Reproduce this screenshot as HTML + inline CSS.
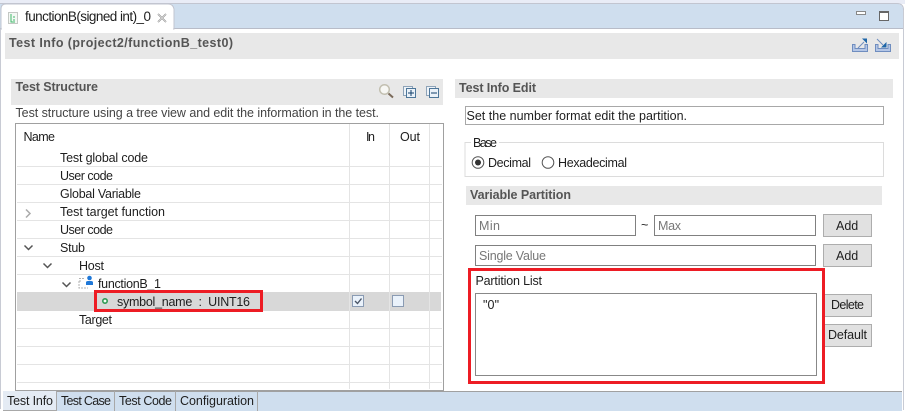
<!DOCTYPE html>
<html><head><meta charset="utf-8"><style>
html,body{margin:0;padding:0;background:#fff;width:905px;height:414px;overflow:hidden}
svg{display:block}
text{font-family:"Liberation Sans",sans-serif;font-size:12.5px;fill:#1e1e1e;white-space:pre}
.b{font-weight:bold;fill:#555;font-size:12.5px}
.g{fill:#777}
</style></head><body>
<svg width="905" height="414" viewBox="0 0 905 414" xmlns="http://www.w3.org/2000/svg" shape-rendering="crispEdges">
<rect width="905" height="414" fill="#fff"/>
<rect width="905" height="4" fill="#e9ecf6"/>
<path d="M0 4H897Q903 4 903 10V28H0Z" fill="#cfdeee"/>
<path d="M0 3.500H897Q903.500 3.500 903.500 10" fill="none" stroke="#c2c5d0" shape-rendering="auto"/>
<rect y="28" width="904" height="1" fill="#b8bcc8"/>
<rect x="903" y="10" width="1" height="400" fill="#c8cbd4"/>
<rect x="0" y="29" width="1" height="380" fill="#c8cbd4"/>
<path d="M1 29V9Q1 4 6 4H168Q173 4 174 9V29Z" fill="#fff" stroke="#c2c5d0" shape-rendering="auto"/>
<rect x="2" y="28" width="171" height="2" fill="#fff"/>
<!-- tab icon -->
<rect x="8.500" y="12.500" width="9" height="11" fill="#f4f8f4" stroke="#c4c8c4"/>
<path d="M11 14V22H15M13 17H15M13 20H15" fill="none" stroke="#3fb86a"/>
<text x="25" y="21" textLength="126" style="font-size:13.500px">functionB(signed int)_0</text>
<path d="M158 14L166 22M166 14L158 22" stroke="#9a9a9a" fill="none" stroke-width="1.600" shape-rendering="auto"/>
<path d="M158 14L166 22M166 14L158 22" stroke="#fff" fill="none" stroke-width="0.500" shape-rendering="auto"/>
<!-- min/max -->
<rect x="856.500" y="11.500" width="9" height="3" fill="#fff" stroke="#888"/>
<rect x="879.500" y="11.500" width="9" height="9" fill="#fff" stroke="#666"/>
<rect x="880" y="12" width="8" height="1" fill="#666"/>
<!-- header -->
<rect x="5" y="33" width="894" height="26" fill="#e8e8e8"/>
<text class="b" x="9" y="47" textLength="224">Test Info (project2/functionB_test0)</text>
<!-- export / import -->
<path d="M852.500 44.500V51.500H867.500V44.500H865V48.500H855V44.500Z" fill="#b4c6e6" stroke="#6f8dbf"/>
<path d="M858 48L864 42" stroke="#6f8dbf" fill="none" shape-rendering="auto"/>
<path d="M862 38.500H867V43.500Z" fill="#1f66a8" shape-rendering="auto"/>
<path d="M875.500 44.500V51.500H890.500V44.500H888V48.500H878V44.500Z" fill="#b4c6e6" stroke="#6f8dbf"/>
<path d="M877 39L883 45" stroke="#6f8dbf" fill="none" shape-rendering="auto"/>
<path d="M881 47.500H886.500V42Z" fill="#1f66a8" shape-rendering="auto"/>
<!-- section headers -->
<rect x="11" y="79" width="432" height="26" fill="#e8e8e8"/>
<text class="b" x="15.500" y="91" textLength="82.500">Test Structure</text>
<rect x="455" y="79" width="438" height="19" fill="#e8e8e8"/>
<text class="b" x="459" y="92" textLength="77">Test Info Edit</text>
<!-- search & tree tools -->
<circle cx="384.500" cy="89.500" r="4.800" fill="#f7f7f4" stroke="#c2bfb0" stroke-width="1.500" shape-rendering="auto"/>
<path d="M388.500 93.500L393 97.500" stroke="#7a6a5a" stroke-width="2" shape-rendering="auto"/>
<rect x="403.500" y="86.500" width="9" height="9" fill="#eef3f8" stroke="#8ea3b8"/>
<rect x="406.500" y="88.500" width="9" height="9" fill="#eaf1f8" stroke="#4d7699"/>
<path d="M411 90V96M408 93H414" stroke="#123f6a" fill="none"/>
<rect x="426.500" y="86.500" width="9" height="9" fill="#eef3f8" stroke="#8ea3b8"/>
<rect x="429.500" y="88.500" width="9" height="9" fill="#eaf1f8" stroke="#4d7699"/>
<path d="M431 93H437" stroke="#123f6a" fill="none"/>
<text x="15.500" y="117" textLength="363.500" style="fill:#444">Test structure using a tree view and edit the information in the test.</text>
<!-- table -->
<rect x="15.500" y="123.500" width="428" height="267" fill="#fff" stroke="#a0a0a0"/>
<rect x="15" y="390" width="429" height="1.500" fill="#a0a0a0"/>
<rect x="17" y="292" width="424" height="19" fill="#d8d8d8"/>
<g fill="#e4e4e4">
<rect x="17" y="166" width="425" height="1"/><rect x="17" y="184" width="425" height="1"/>
<rect x="17" y="202" width="425" height="1"/><rect x="17" y="220" width="425" height="1"/>
<rect x="17" y="238" width="425" height="1"/><rect x="17" y="256" width="425" height="1"/>
<rect x="17" y="274" width="425" height="1"/><rect x="17" y="328" width="425" height="1"/>
<rect x="17" y="346" width="425" height="1"/><rect x="17" y="364" width="425" height="1"/>
<rect x="17" y="382" width="425" height="1"/>
<rect x="349" y="124" width="1" height="265"/><rect x="389" y="124" width="1" height="265"/><rect x="429" y="124" width="1" height="265"/>
</g>
<text x="23.500" y="141" textLength="31.500">Name</text>
<text x="366" y="141" textLength="9">In</text>
<text x="400" y="141" textLength="20">Out</text>
<text x="60" y="162" textLength="88">Test global code</text>
<text x="60" y="180" textLength="53">User code</text>
<text x="60" y="198" textLength="81">Global Variable</text>
<text x="60" y="216" textLength="105">Test target function</text>
<text x="60" y="234" textLength="53">User code</text>
<text x="60" y="252" textLength="25">Stub</text>
<text x="79" y="270" textLength="25">Host</text>
<text x="98" y="288" textLength="63">functionB_1</text>
<text x="117" y="306" textLength="133">symbol_name  :  UINT16</text>
<text x="79" y="324" textLength="33">Target</text>
<!-- chevrons -->
<g fill="none" shape-rendering="auto" stroke-width="1.500">
<path d="M26 209.500L30 213.500L26 217.500" stroke="#aaa"/>
<path d="M24.500 245.500L28.500 249.500L32.500 245.500" stroke="#555"/>
<path d="M43.500 263.500L47.500 267.500L51.500 263.500" stroke="#555"/>
<path d="M62.500 282.500L66.500 286.500L70.500 282.500" stroke="#555"/>
</g>
<!-- function icon -->
<path d="M79 281V288H88M79 281H82M79 278.500H84" fill="none" stroke="#b0b0b0" stroke-dasharray="2 1"/>
<circle cx="89.500" cy="278" r="2.300" fill="#1f78d8" shape-rendering="auto"/>
<path d="M86 285V282.500Q86 281 88 281H91Q93 281 93 282.500V285Z" fill="#1f78d8" shape-rendering="auto"/>
<circle cx="105" cy="301" r="2.200" fill="#f4fff4" stroke="#2f9a55" stroke-width="1.600" shape-rendering="auto"/>
<!-- checkboxes -->
<rect x="352.500" y="295.500" width="11" height="11" fill="#eaf2fb" stroke="#8a9bb3"/>
<path d="M355 301L357.500 303.500L361.500 298.500" fill="none" stroke="#4a5566" stroke-width="1.400" shape-rendering="auto"/>
<rect x="392.500" y="295.500" width="11" height="11" fill="#eaf2fb" stroke="#8a9bb3"/>
<!-- right: description -->
<rect x="465.500" y="106.500" width="418" height="18" fill="#fff" stroke="#a8a8a8"/>
<text x="466.500" y="120" textLength="220.500">Set the number format edit the partition.</text>
<!-- Base -->
<rect x="465" y="142.500" width="418.500" height="34" fill="#fff" stroke="#dcdcdc"/>
<rect x="471" y="140" width="28" height="6" fill="#fff"/>
<text x="473" y="147" textLength="24">Base</text>
<circle cx="478" cy="162.500" r="5.800" fill="#fff" stroke="#555" shape-rendering="auto"/>
<circle cx="478" cy="162.500" r="3" fill="#333" shape-rendering="auto"/>
<text x="488" y="167" textLength="43">Decimal</text>
<circle cx="548" cy="162.500" r="5.800" fill="#fff" stroke="#555" shape-rendering="auto"/>
<text x="558" y="167" textLength="69">Hexadecimal</text>
<!-- Variable Partition -->
<rect x="466" y="186" width="416" height="19" fill="#e8e8e8"/>
<text class="b" x="470" y="199" textLength="101">Variable Partition</text>
<rect x="475.500" y="215.500" width="160" height="20" fill="#fff" stroke="#808080"/>
<text class="g" x="479" y="230" textLength="21">Min</text>
<text x="641" y="229" textLength="7">~</text>
<rect x="654.500" y="215.500" width="161" height="20" fill="#fff" stroke="#808080"/>
<text class="g" x="658" y="230" textLength="23">Max</text>
<rect x="475.500" y="245.500" width="340" height="20" fill="#fff" stroke="#808080"/>
<text class="g" x="479" y="260" textLength="67">Single Value</text>
<!-- Buttons -->
<g fill="#e1e1e1" stroke="#adadad">
<rect x="823.500" y="214.500" width="48" height="22"/>
<rect x="823.500" y="244.500" width="48" height="22"/>
<rect x="823.500" y="294.500" width="48" height="22"/>
<rect x="823.500" y="324.500" width="48" height="22"/>
</g>
<text x="836" y="230">Add</text>
<text x="836" y="260">Add</text>
<text x="831" y="309" textLength="33">Delete</text>
<text x="828" y="339" textLength="39">Default</text>
<!-- Partition list -->
<text x="475.500" y="285" textLength="66.500">Partition List</text>
<rect x="475.500" y="293.500" width="341" height="82" fill="#fff" stroke="#888"/>
<text x="483" y="309" textLength="16">"0"</text>
<!-- bottom -->
<rect x="3" y="391" width="899" height="20" fill="#cfdeee"/>
<rect x="3" y="391" width="899" height="1" fill="#a0a0a0"/>
<rect x="3" y="391" width="53" height="19" fill="#e4ebf4"/>
<rect x="56" y="391" width="1" height="20" fill="#a8a8a8"/>
<rect x="114" y="391" width="1" height="20" fill="#a8a8a8"/>
<rect x="175" y="391" width="1" height="20" fill="#a8a8a8"/>
<rect x="257" y="391" width="1" height="20" fill="#a8a8a8"/>
<rect x="3" y="410" width="53" height="1" fill="#a8a8a8"/>
<text x="7" y="405" textLength="46">Test Info</text>
<text x="61" y="405" textLength="50">Test Case</text>
<text x="119" y="405" textLength="53">Test Code</text>
<text x="180" y="405" textLength="74">Configuration</text>
<!-- red highlights -->
<rect x="95.500" y="291.500" width="166" height="19" fill="none" stroke="#ed1c24" stroke-width="3"/>
<rect x="469.500" y="269.500" width="354" height="113" fill="none" stroke="#ed1c24" stroke-width="3"/>
</svg>
</body></html>
